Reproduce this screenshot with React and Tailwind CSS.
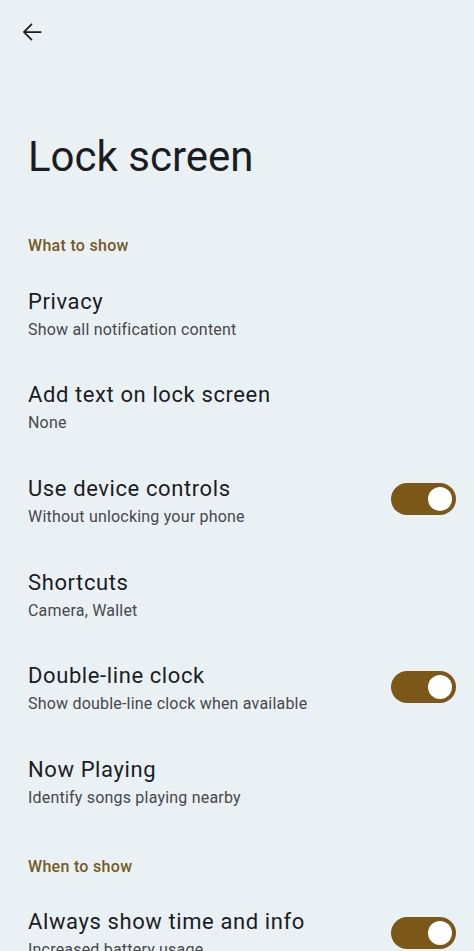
import React from 'react';

const sections = [
  {
    header: 'What to show',
    items: [
      { title: 'Privacy', subtitle: 'Show all notification content' },
      { title: 'Add text on lock screen', subtitle: 'None' },
      { title: 'Use device controls', subtitle: 'Without unlocking your phone', toggle: true },
      { title: 'Shortcuts', subtitle: 'Camera, Wallet' },
      { title: 'Double-line clock', subtitle: 'Show double-line clock when available', toggle: true },
      { title: 'Now Playing', subtitle: 'Identify songs playing nearby' },
    ],
  },
  {
    header: 'When to show',
    items: [{ title: 'Always show time and info', subtitle: 'Increased battery usage', toggle: true }],
  },
];

const Toggle = () => (
  <div className="mb-[5px] flex h-8 w-[65px] shrink-0 items-center justify-end rounded-full bg-[#7b5818] pr-[4px]">
    <div className="h-6 w-6 rounded-full bg-white" />
  </div>
);

const Row = ({ title, subtitle, toggle }) => (
  <div className="flex items-center justify-between py-[18.8px] pl-7 pr-[18px]">
    <div className="flex flex-col">
      <span className="text-[22px] leading-[30px] tracking-[0.6px] text-[#1b1c1f]">{title}</span>
      <span className="text-[16px] leading-[26px] tracking-[0.2px] text-[#46484c]">{subtitle}</span>
    </div>
    {toggle && <Toggle />}
  </div>
);

export default function App() {
  return (
    <div className="h-[951px] w-full overflow-hidden bg-[#eaf1f5]" style={{ fontFamily: 'Roboto, "Noto Sans", sans-serif' }}>
      <div className="pl-[18px] pt-[18px]">
        <svg width="28" height="28" viewBox="0 0 24 24" className="text-[#1b1c1f]">
          <path fill="currentColor" d="M20 11.25H6.9l5.6-5.6-1.05-1.05L4.05 12l7.4 7.4 1.05-1.05-5.6-5.6H20v-1.5z" />
        </svg>
      </div>
      <h1 className="mt-[87px] pl-7 text-[42px] leading-[48px] text-[#1b1c1f]">Lock screen</h1>
      {sections.map((s, i) => (
        <div key={s.header} className={i === 0 ? 'mt-[53px]' : 'mt-[25px]'}>
          <div className="pl-7 pb-[10px] text-[16px] leading-6 font-medium tracking-[0.3px] text-[#755a1f]">{s.header}</div>
          {s.items.map((it) => (
            <Row key={it.title} {...it} />
          ))}
        </div>
      ))}
    </div>
  );
}
